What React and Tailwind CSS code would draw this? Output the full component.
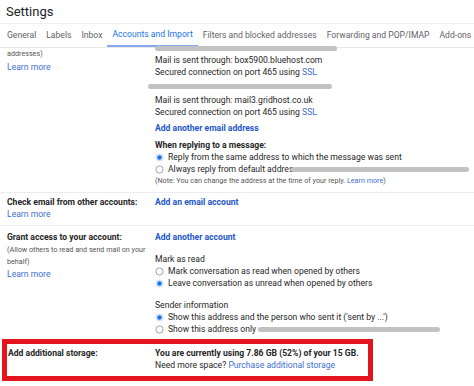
const TABS = [
  { label: "General" },
  { label: "Labels" },
  { label: "Inbox" },
  { label: "Accounts and Import", active: true },
  { label: "Filters and blocked addresses" },
  { label: "Forwarding and POP/IMAP" },
  { label: "Add-ons" },
];

const Blur = ({ className }) => (
  <div className={`h-[5px] rounded-full bg-[#c2c2c2] ${className}`} />
);

const Radio = ({ checked, children }) => (
  <div className="flex items-center h-[12px] leading-[12px]">
    <svg width="9" height="9" viewBox="0 0 9 9" className="mr-[4px] shrink-0">
      {checked ? (
        <>
          <circle cx="4.5" cy="4.5" r="4" fill="#d6e4fb" />
          <circle cx="4.5" cy="4.5" r="2.2" fill="#1a73e8" />
        </>
      ) : (
        <circle cx="4.5" cy="4.5" r="3.6" fill="white" stroke="#8a8a8a" strokeWidth="0.8" />
      )}
    </svg>
    {children}
  </div>
);

const Link = ({ children, bold }) => (
  <span className={bold ? "text-[#2457c9] font-bold" : "text-[#3f6fd3]"}>{children}</span>
);

export default function App() {
  return (
    <div
      className="w-[474px] h-[386px] overflow-hidden bg-white text-[#262626] text-[8.6px]"
      style={{ fontFamily: "Roboto, 'Liberation Sans', Arial, sans-serif" }}
    >
      {/* ── Title ─────────────────────────── */}
      <div className="h-[24px] border-b border-[#efefef] px-[6px] flex items-center">
        <span className="text-[13px] text-[#202124]">Settings</span>
      </div>

      {/* ── Tabs ──────────────────────────── */}
      <div className="h-[24px] border-b border-[#e8e8e8] flex pl-[7px] gap-[10px] text-[8.6px] whitespace-nowrap">
        {TABS.map((t) => (
          <div
            key={t.label}
            className={`h-full flex items-center ${
              t.active
                ? "text-[#1a73e8] border-b-2 border-[#86a9ee] px-[5px] -mx-[5px]"
                : "text-[#5f6368]"
            }`}
          >
            {t.label}
          </div>
        ))}
      </div>

      {/* ── Send mail as (cut off) ────────── */}
      <div className="flex border-b border-[#ececec] pb-[6px]">
        <div className="w-[155px] shrink-0 pl-[7px]">
          <div className="h-[12px] leading-[12px] text-[7.2px] text-[#555]">addresses)</div>
          <div className="h-[12px] leading-[12px] mt-[1px]"><Link>Learn more</Link></div>
        </div>
        <div className="flex-1 whitespace-nowrap">
          <div className="h-[6px] flex items-start -mt-[2px]">
            <Blur className="w-[182px]" />
          </div>
          <div className="h-[12px] leading-[12px] mt-[2px]">Mail is sent through: box5900.bluehost.com</div>
          <div className="h-[12px] leading-[12px]">Secured connection on port 465 using <Link>SSL</Link></div>
          <div className="h-[16px] flex items-center">
            <Blur className="w-[184px] -ml-[7px]" />
          </div>
          <div className="h-[12px] leading-[12px]">Mail is sent through: mail3.gridhost.co.uk</div>
          <div className="h-[12px] leading-[12px]">Secured connection on port 465 using <Link>SSL</Link></div>
          <div className="h-[12px] leading-[12px] mt-[4px]"><Link bold>Add another email address</Link></div>
          <div className="h-[12px] leading-[12px] mt-[5px] font-bold">When replying to a message:</div>
          <Radio checked>Reply from the same address to which the message was sent</Radio>
          <Radio>
            <span>Always reply from default addres</span>
            <Blur className="w-[178px] -ml-[2px]" />
          </Radio>
          <div className="h-[11px] leading-[11px] text-[7.2px] text-[#555]">
            (Note: You can change the address at the time of your reply. <Link>Learn more</Link>)
          </div>
        </div>
      </div>

      {/* ── Check email ───────────────────── */}
      <div className="flex border-b border-[#ececec] pt-[3px] pb-[5px]">
        <div className="w-[155px] shrink-0 pl-[7px]">
          <div className="h-[12px] leading-[12px] font-bold">Check email from other accounts:</div>
          <div className="h-[12px] leading-[12px]"><Link>Learn more</Link></div>
        </div>
        <div className="flex-1">
          <div className="h-[12px] leading-[12px]"><Link bold>Add an email account</Link></div>
        </div>
      </div>

      {/* ── Grant access ──────────────────── */}
      <div className="flex pt-[5px]">
        <div className="w-[155px] shrink-0 pl-[7px]">
          <div className="h-[12px] leading-[12px] font-bold">Grant access to your account:</div>
          <div className="h-[12px] leading-[12px] text-[7.2px] text-[#555] mt-[1px]">(Allow others to read and send mail on your</div>
          <div className="h-[11px] leading-[11px] text-[7.2px] text-[#555]">behalf)</div>
          <div className="h-[12px] leading-[12px] mt-[1px]"><Link>Learn more</Link></div>
        </div>
        <div className="flex-1 whitespace-nowrap">
          <div className="h-[12px] leading-[12px]"><Link bold>Add another account</Link></div>
          <div className="h-[12px] leading-[12px] mt-[10px]">Mark as read</div>
          <Radio>Mark conversation as read when opened by others</Radio>
          <Radio checked>Leave conversation as unread when opened by others</Radio>
          <div className="h-[12px] leading-[12px] mt-[10px]">Sender information</div>
          <Radio checked>Show this address and the person who sent it ('sent by ...')</Radio>
          <Radio>
            <span>Show this address only</span>
            <Blur className="w-[182px] ml-[2px]" />
          </Radio>
        </div>
      </div>

      {/* ── Storage (highlighted) ─────────── */}
      <div className="ml-[2px] mt-[4px] w-[371px] h-[42px] border-[5px] border-[#e3141d] flex pt-[3px]">
        <div className="w-[148px] shrink-0 pl-[1px]">
          <div className="h-[12px] leading-[12px] font-bold">Add additional storage:</div>
        </div>
        <div className="flex-1 whitespace-nowrap">
          <div className="h-[12px] leading-[12px] font-bold">You are currently using 7.86 GB (52%) of your 15 GB.</div>
          <div className="h-[12px] leading-[12px]">Need more space? <Link>Purchase additional storage</Link></div>
        </div>
      </div>
    </div>
  );
}
